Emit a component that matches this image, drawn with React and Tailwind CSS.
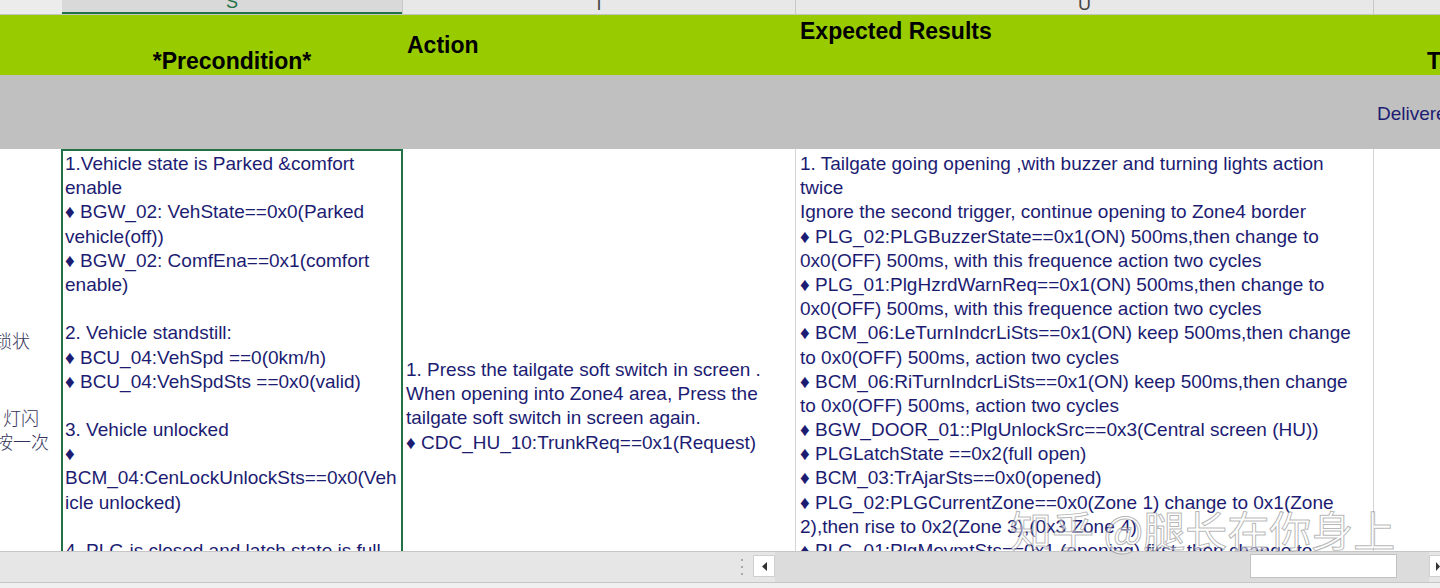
import React from 'react';

const NAVY = 'text-[#1c1c72]';

const preconditionLines = [
  '1.Vehicle state is Parked &comfort',
  'enable',
  '♦ BGW_02: VehState==0x0(Parked',
  'vehicle(off))',
  '♦ BGW_02: ComfEna==0x1(comfort',
  'enable)',
  '',
  '2. Vehicle standstill:',
  '♦ BCU_04:VehSpd ==0(0km/h)',
  '♦ BCU_04:VehSpdSts ==0x0(valid)',
  '',
  '3. Vehicle unlocked',
  '♦',
  'BCM_04:CenLockUnlockSts==0x0(Veh',
  'icle unlocked)',
  '',
  '4. PLG is closed and latch state is full',
];

const actionLines = [
  '1. Press the tailgate soft switch in screen .',
  'When opening into Zone4 area, Press the',
  'tailgate soft switch in screen again.',
  '♦ CDC_HU_10:TrunkReq==0x1(Request)',
];

const expectedLines = [
  '1. Tailgate going opening ,with buzzer and turning lights action',
  'twice',
  'Ignore the second trigger, continue opening to Zone4 border',
  '♦ PLG_02:PLGBuzzerState==0x1(ON) 500ms,then change to',
  '0x0(OFF) 500ms, with this frequence action two cycles',
  '♦ PLG_01:PlgHzrdWarnReq==0x1(ON) 500ms,then change to',
  '0x0(OFF) 500ms, with this frequence action two cycles',
  '♦ BCM_06:LeTurnIndcrLiSts==0x1(ON) keep 500ms,then change',
  'to 0x0(OFF) 500ms, action two cycles',
  '♦ BCM_06:RiTurnIndcrLiSts==0x1(ON) keep 500ms,then change',
  'to 0x0(OFF) 500ms, action two cycles',
  '♦ BGW_DOOR_01::PlgUnlockSrc==0x3(Central screen (HU))',
  '♦ PLGLatchState ==0x2(full open)',
  '♦ BCM_03:TrAjarSts==0x0(opened)',
  '♦ PLG_02:PLGCurrentZone==0x0(Zone 1) change to 0x1(Zone',
  '2),then rise to 0x2(Zone 3),(0x3 Zone 4)',
  '♦ PLG_01:PlgMovmtSts==0x1 (opening) first, then change to',
];

function Lines({ lines }) {
  return lines.map((line, i) => (
    <div key={i} className="h-[24.2px] leading-[24.2px] whitespace-nowrap">
      {line || '\u00a0'}
    </div>
  ));
}

function ColHeader({ label, className = '' }) {
  return (
    <div className={`h-full overflow-hidden flex justify-center items-end ${className}`}>
      <span className="text-[18px] leading-[18px] mb-[1px]">{label}</span>
    </div>
  );
}

export default function App() {
  return (
    <div className="relative w-[1440px] h-[588px] overflow-hidden bg-white flex flex-col font-['Liberation_Sans',Arial,sans-serif]">
      {/* column letters, scrolled half out of view */}
      <div className="h-[15px] flex shrink-0 border-b border-[#c4c4c4] bg-[#e8e8e8] text-[#444]">
        <div className="w-[62px] bg-[#ececec]" />
        <ColHeader label="S" className="w-[340px] bg-[#d9d9d9] border-b-2 border-[#217346] text-[#217346]" />
        <ColHeader label="T" className="w-[393px] border-l border-[#c8c8c8]" />
        <ColHeader label="U" className="w-[578px] border-l border-[#c8c8c8]" />
        <div className="flex-1 border-l border-[#c8c8c8]" />
      </div>

      {/* green title row */}
      <div className="h-[60px] flex shrink-0 bg-[#99cc00] text-black font-bold text-[23px] leading-[26px]">
        <div className="w-[62px]" />
        <div className="w-[340px] flex justify-center items-end pb-[1px]">*Precondition*</div>
        <div className="w-[393px] flex items-center pl-[5px]">Action</div>
        <div className="w-[578px] pl-[5px] pt-[3px]">Expected Results</div>
        <div className="flex-1 flex items-end pl-[54px] pb-[1px] overflow-hidden">T</div>
      </div>

      {/* grey row */}
      <div className={`h-[74px] flex shrink-0 bg-[#c0c0c0] text-[19px] ${NAVY}`}>
        <div className="w-[1373px]" />
        <div className="flex-1 flex items-center pl-[4px] pt-[4px] overflow-hidden whitespace-nowrap">Delivered</div>
      </div>

      {/* data row */}
      <div className={`flex-1 flex overflow-hidden text-[19px] ${NAVY}`}>
        <div className="w-[61px] shrink-0 overflow-hidden pt-[179px] text-[18px] text-[#34345a] font-['Noto_Sans_CJK_SC',sans-serif] font-light">
          <div className="h-[24px] leading-[24px] whitespace-nowrap -ml-[6px]">锁状</div>
          <div className="h-[24px] leading-[24px] whitespace-nowrap ml-[3px] mt-[53px]">灯闪</div>
          <div className="h-[24px] leading-[24px] whitespace-nowrap -ml-[5px]">按一次</div>
        </div>
        <div className="w-[342px] shrink-0 border-2 border-b-0 border-[#217346] pl-[2px] pt-[1px] overflow-hidden">
          <Lines lines={preconditionLines} />
        </div>
        <div className="w-[392px] shrink-0 pl-[3px] pt-[209px] overflow-hidden">
          <Lines lines={actionLines} />
        </div>
        <div className="w-[578px] shrink-0 border-l border-[#d4d4d4] pl-[4px] pt-[3px] overflow-hidden">
          <Lines lines={expectedLines} />
        </div>
        <div className="flex-1 border-l border-[#d4d4d4]" />
      </div>

      {/* horizontal scroll bar */}
      <div className="h-[31px] shrink-0 flex border-t border-[#c6c6c6] bg-[#e6e6e6]">
        <div className="w-[731px]" />
        <div className="w-[22px] flex flex-col items-center justify-center gap-[5px]">
          <span className="w-[2px] h-[2px] bg-[#a8a8a8]" />
          <span className="w-[2px] h-[2px] bg-[#a8a8a8]" />
          <span className="w-[2px] h-[2px] bg-[#a8a8a8]" />
        </div>
        <div className="w-[22px] h-[22px] mt-[3px] flex items-center justify-center bg-white border border-[#cfcfcf]">
          <svg width="5" height="9" viewBox="0 0 5 9">
            <polygon points="5,0 5,9 0,4.5" fill="#333" />
          </svg>
        </div>
        <div className="flex-1 bg-[#dcdcdc] pt-[2px] pl-[475px]">
          <div className="w-[147px] h-[24px] bg-white border border-[#c2c2c2]" />
        </div>
        <div className="w-[11px] h-[22px] mt-[3px] flex items-center pl-[6px] bg-white border border-r-0 border-[#cfcfcf]">
          <svg width="4" height="9" viewBox="0 0 4 9">
            <polygon points="0,0 0,9 4,4.5" fill="#333" />
          </svg>
        </div>
      </div>
      <div className="h-[6px] shrink-0 border-t border-[#c6c6c6] bg-[#f0f0f0]" />

      {/* site watermark */}
      <div className="absolute left-[1010px] top-[508px] text-[42px] leading-none whitespace-nowrap font-['Noto_Sans_CJK_SC',sans-serif] text-white/50 [-webkit-text-stroke:1px_rgba(120,120,120,0.55)]">
        知乎 @腿长在你身上
      </div>
    </div>
  );
}
